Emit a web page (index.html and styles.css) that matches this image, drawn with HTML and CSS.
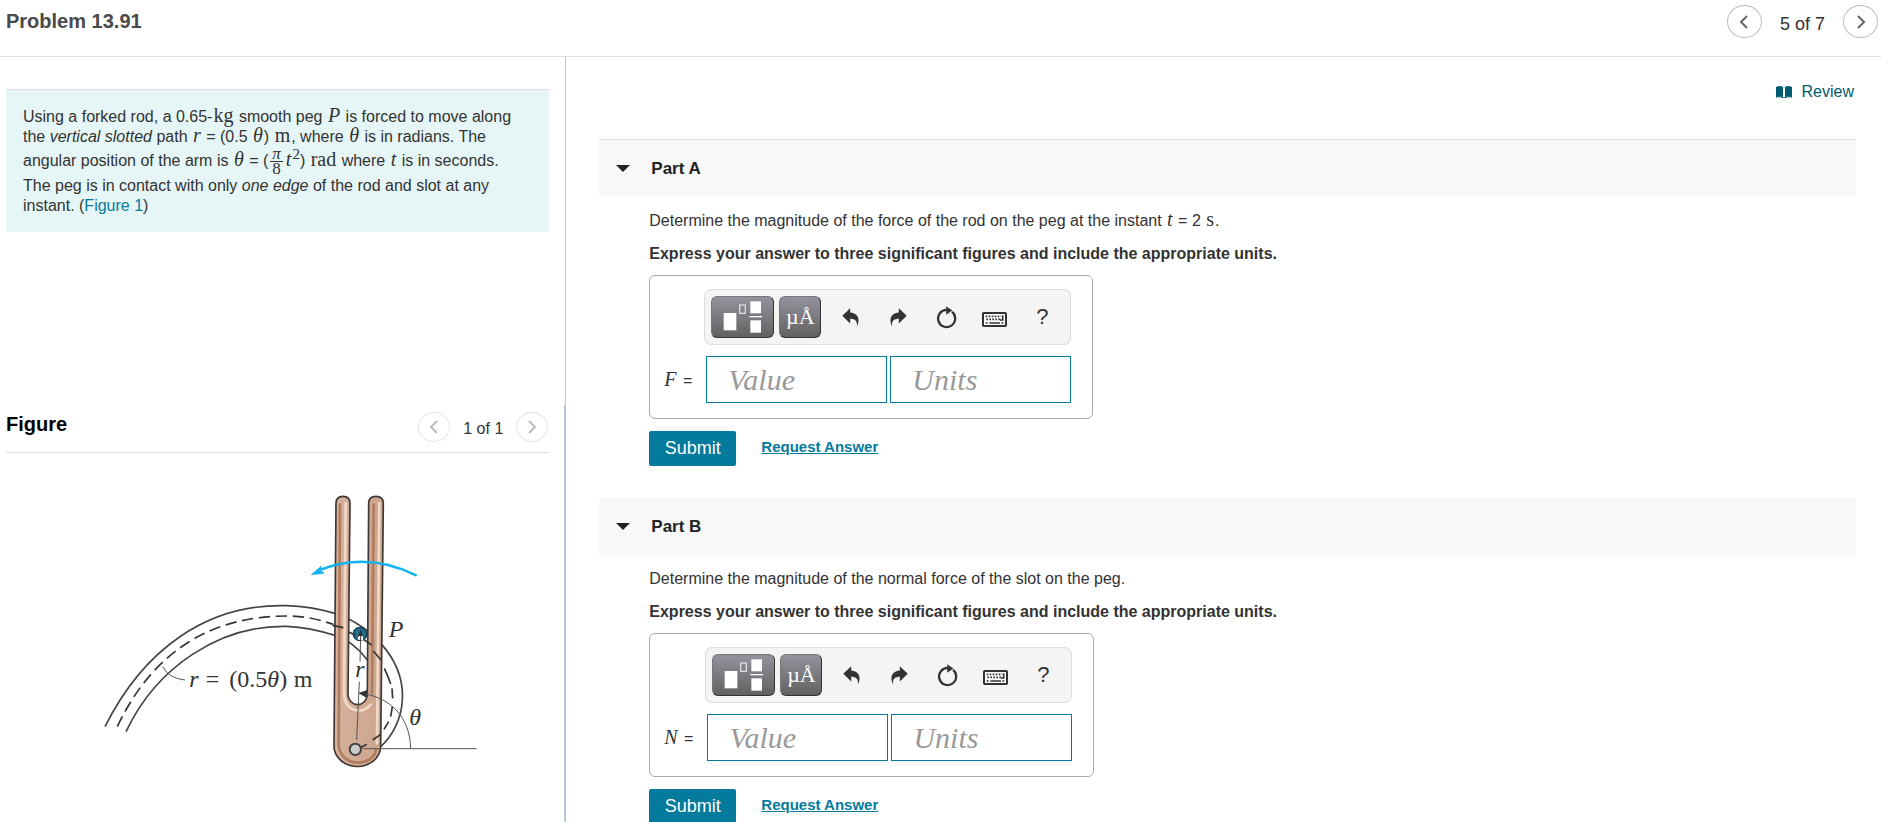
FILE: index.html
```
<!DOCTYPE html>
<html lang="en">
    <head>
        <meta charset="utf-8">
        <meta name="viewport" content="width=device-width, initial-scale=1">
        <title>Problem 13.91</title>
        <link rel="stylesheet" href="styles.css">
    </head>
    <body>
        <svg class="defs" width="0" height="0" aria-hidden="true">
            <symbol id="chevron-left" viewBox="0 0 10 16"><path d="M8 2L2 8l6 6" fill="none" stroke="currentColor" stroke-width="2"/></symbol>
            <symbol id="chevron-right" viewBox="0 0 10 16"><path d="M2 2l6 6-6 6" fill="none" stroke="currentColor" stroke-width="2"/></symbol>
            <symbol id="templates" viewBox="0 0 120 96">
                <rect x="2" y="36" width="38" height="52" fill="#fff"/>
                <rect x="50" y="12" width="17" height="25" fill="none" stroke="#ddd" stroke-width="4"/>
                <rect x="82" y="1" width="32" height="36" fill="#fff"/>
                <rect x="79" y="45" width="38" height="4" fill="#fff"/>
                <rect x="82" y="58" width="32" height="37" fill="#fff"/>
            </symbol>
            <symbol id="undo" viewBox="0 0 56 64"><path d="M3 27L27 4v13C49 19 60 35 47 61C50 45 44 36 27 36v14z" fill="#333"/></symbol>
            <symbol id="redo" viewBox="0 0 56 64"><path d="M53 27L29 4v13C7 19-4 35 9 61C6 45 12 36 29 36v14z" fill="#333"/></symbol>
            <symbol id="reset" viewBox="0 0 62 70">
                <path d="M48 18A26 26 0 1 1 32 12" fill="none" stroke="#333" stroke-width="7"/>
                <path d="M30 1l19 13-19 13z" fill="#333"/>
            </symbol>
            <symbol id="keyboard" viewBox="0 0 75 45">
                <rect x="3" y="3" width="69" height="39" rx="2" fill="#fff" stroke="#333" stroke-width="6"/>
                <path d="M11 13h46M13 22h42" stroke="#333" stroke-width="5" stroke-dasharray="5 4"/>
                <path d="M11 33h6M22 33h32M58 33h6M62 10v14h-8" fill="none" stroke="#333" stroke-width="5"/>
            </symbol>
        </svg>

        <header class="topbar">
            <h1>Problem 13.91</h1>
            <nav class="pager">
                <button type="button" aria-label="Previous problem"><svg width="10" height="16"><use href="#chevron-left"/></svg></button>
                <span>5 of 7</span>
                <button type="button" aria-label="Next problem"><svg width="10" height="16"><use href="#chevron-right"/></svg></button>
            </nav>
        </header>

        <main class="content">
            <div class="left">
                <section class="problem">
                    <p class="statement">Using a forked rod, a 0.65-<span class="math">kg</span> smooth peg <i class="math">P</i> is forced to move along the <em>vertical slotted</em> path <i class="math">r</i> = (0.5 <i class="math">θ</i>) <span class="math">m</span>, where <i class="math">θ</i> is in radians. The angular position of the arm is <i class="math">θ</i> = (<span class="frac"><i>π</i><span>8</span></span><i class="math">t</i><sup>2</sup>) <span class="math">rad</span> where <i class="math">t</i> is in seconds. The peg is in contact with only <em>one edge</em> of the rod and slot at any instant. (<a href="#figure">Figure 1</a>)</p>
                </section>

                <section class="figure" id="figure">
                    <div class="figure-head">
                        <h2>Figure</h2>
                        <nav class="pager small">
                            <button type="button" disabled aria-label="Previous figure"><svg width="10" height="16"><use href="#chevron-left"/></svg></button>
                            <span>1 of 1</span>
                            <button type="button" disabled aria-label="Next figure"><svg width="10" height="16"><use href="#chevron-right"/></svg></button>
                        </nav>
                    </div>
                    <svg class="drawing" viewBox="0 0 1200 900" role="img" aria-label="Forked rod and slotted path">
                        <defs>
                            <linearGradient id="rod" x1="0" x2="1">
                                <stop offset="0" stop-color="#d6b29c"/>
                                <stop offset="1" stop-color="#cca48c"/>
                            </linearGradient>
                        </defs>
                        <!-- slot edges -->
                        <g fill="none" stroke="#444" stroke-width="5">
                            <path d="M45 740C160 510 350 370 590 377C650 379 700 390 735 400C800 422 840 455 875 493C925 550 940 610 937 660C934 720 905 770 872 800"/>
                            <path d="M108 755C200 560 390 435 590 439C650 442 700 455 735 466C775 480 810 510 832 540"/>
                        </g>
                        <path d="M82 740C190 510 370 405 600 408C650 409 690 420 730 433" fill="none" stroke="#333" stroke-width="5" stroke-dasharray="34 17"/>
                        <circle cx="810" cy="462" r="20" fill="#22708f" stroke="#173c50" stroke-width="4"/>
                        <!-- forked rod -->
                        <path d="M738 70Q738 49 759 49Q780 49 780 70L774 640C774 685 832 685 832 640L836 70Q836 49 858 49Q880 49 880 70L872 800A70 62 0 0 1 732 795Z" fill="url(#rod)" stroke="#3f3733" stroke-width="5"/>
                        <g fill="none" stroke-linecap="round">
                            <path d="M750 74L746 795C750 860 845 865 858 810M851 74L846 640" stroke="#b07c5e" stroke-width="8"/>
                            <path d="M767 70L762 640C766 700 820 702 842 674M868 70L861 790" stroke="#f1d9ca" stroke-width="8"/>
                        </g>
                        <path d="M728 436L760 443M775 455L795 465M820 478L845 495M850 513L873 540M883 565Q895 590 902 612M906 625L908 655M907 680L902 710M896 725L882 748M872 763L848 780M830 793L812 803" fill="none" stroke="#333" stroke-width="5"/>
                        <!-- dimensions -->
                        <g fill="none" stroke="#555" stroke-width="3">
                            <path d="M812 470L810 545M808 605L800 780M820 806H1160M825 642C900 655 960 710 962 805"/>
                            <path d="M218 560Q235 595 285 600"/>
                        </g>
                        <path d="M805 639L832 630 829 653ZM812 448L802 472 820 472Z" fill="#333"/>
                        <path d="M802 478L806 468 818 468 820 482Z" fill="#fff"/>
                        <path d="M812 462V482" stroke="#333" stroke-width="3"/>
                        <circle cx="796" cy="808" r="17" fill="#c9cacc" stroke="#444" stroke-width="6"/>
                        <path d="M692 269Q835 214 980 287" fill="none" stroke="#12b2ef" stroke-width="7"/>
                        <path d="M664 284L694 258 692 271 702 280Z" fill="#12b2ef" stroke="#12b2ef" stroke-width="2"/>
                        <g class="drawing-text">
                            <text x="298" y="620" font-style="italic">r</text>
                            <text x="347" y="620">=</text>
                            <text x="418" y="620">(0.5<tspan font-style="italic">θ</tspan>)</text>
                            <text x="611" y="620">m</text>
                            <text x="896" y="470" font-style="italic">P</text>
                            <text x="796" y="592" font-style="italic">r</text>
                            <text x="958" y="735" font-style="italic">θ</text>
                        </g>
                    </svg>
                </section>
            </div>

            <div class="right">
                <a class="review" href="#">
                    <svg width="16" height="12" viewBox="0 0 16 12"><path d="M0 1Q4-1 7 1V11Q4 10 0 11zM9 1Q12-1 16 1V11Q12 10 9 11z" fill="#005a70"/><path d="M0 11Q5 10 8 12Q11 10 16 11" fill="none" stroke="#005a70"/></svg>
                    Review
                </a>

                <details class="part" open>
                    <summary>Part A</summary>
                    <form class="part-body">
                        <p>Determine the magnitude of the force of the rod on the peg at the instant <i class="math">t</i> = 2 <span class="math">s</span>.</p>
                        <p class="hint">Express your answer to three significant figures and include the appropriate units.</p>
                        <div class="answer">
                            <div class="toolbar">
                                <button type="button" class="dark wide" aria-label="Templates"><svg width="40" height="32"><use href="#templates"/></svg></button>
                                <button type="button" class="dark units" aria-label="Symbols">µÅ</button>
                                <button type="button" class="tool" aria-label="Undo"><svg width="19" height="21"><use href="#undo"/></svg></button>
                                <button type="button" class="tool" aria-label="Redo"><svg width="19" height="21"><use href="#redo"/></svg></button>
                                <button type="button" class="tool" aria-label="Reset"><svg width="21" height="23"><use href="#reset"/></svg></button>
                                <button type="button" class="tool low" aria-label="Keyboard shortcuts"><svg width="25" height="15"><use href="#keyboard"/></svg></button>
                                <button type="button" class="tool">?</button>
                            </div>
                            <div class="fields">
                                <label for="valueA"><i>F</i> =</label>
                                <input type="text" id="valueA" placeholder="Value">
                                <input type="text" id="unitsA" placeholder="Units" aria-label="Units">
                            </div>
                        </div>
                        <div class="actions">
                            <button type="submit" class="submit">Submit</button>
                            <a href="#">Request Answer</a>
                        </div>
                    </form>
                </details>

                <details class="part" open>
                    <summary>Part B</summary>
                    <form class="part-body">
                        <p>Determine the magnitude of the normal force of the slot on the peg.</p>
                        <p class="hint">Express your answer to three significant figures and include the appropriate units.</p>
                        <div class="answer">
                            <div class="toolbar">
                                <button type="button" class="dark wide" aria-label="Templates"><svg width="40" height="32"><use href="#templates"/></svg></button>
                                <button type="button" class="dark units" aria-label="Symbols">µÅ</button>
                                <button type="button" class="tool" aria-label="Undo"><svg width="19" height="21"><use href="#undo"/></svg></button>
                                <button type="button" class="tool" aria-label="Redo"><svg width="19" height="21"><use href="#redo"/></svg></button>
                                <button type="button" class="tool" aria-label="Reset"><svg width="21" height="23"><use href="#reset"/></svg></button>
                                <button type="button" class="tool low" aria-label="Keyboard shortcuts"><svg width="25" height="15"><use href="#keyboard"/></svg></button>
                                <button type="button" class="tool">?</button>
                            </div>
                            <div class="fields">
                                <label for="valueB"><i>N</i> =</label>
                                <input type="text" id="valueB" placeholder="Value">
                                <input type="text" id="unitsB" placeholder="Units" aria-label="Units">
                            </div>
                        </div>
                        <div class="actions">
                            <button type="submit" class="submit">Submit</button>
                            <a href="#">Request Answer</a>
                        </div>
                    </form>
                </details>
            </div>
        </main>
    </body>
</html>
```
FILE: styles.css
```
* {
    box-sizing: border-box;
}

body {
    margin: 0;
    height: 100vh;
    display: flex;
    flex-direction: column;
    overflow: hidden;
    background: #fff;
    color: #333;
    font: 16px/20px "Liberation Sans", Arial, sans-serif;
}

h1, h2, p {
    margin: 0;
}

a {
    color: #047a9c;
    text-decoration: none;
}

button {
    font-family: inherit;
    padding: 0;
    cursor: pointer;
}

.defs {
    position: absolute;
}

/* Top bar */
.topbar {
    display: flex;
    justify-content: space-between;
    align-items: flex-start;
    height: 57px;
    padding: 5px 3px 0 6px;
    border-bottom: 1px solid #ddd;
}

.topbar h1 {
    font-size: 20px;
    line-height: 32px;
    color: #4a4a4a;
}

.pager {
    display: flex;
    align-items: center;
    gap: 18px;
    font-size: 18px;
}

.pager span {
    padding-top: 4px;
}

.pager button {
    display: flex;
    align-items: center;
    justify-content: center;
    width: 35px;
    height: 33px;
    border: 1px solid #bbb;
    border-radius: 50%;
    background: #fff;
    color: #666;
}

.pager.small {
    gap: 13px;
    font-size: 16px;
}

.pager.small button {
    width: 32px;
    height: 30px;
    border-color: #e3e3e3;
    color: #bbb;
}

.content {
    flex: 1;
    min-height: 0;
    display: flex;
}

/* Left side: statement and figure */
.left {
    flex: none;
    width: calc(30% + 2px);
    display: grid;
    grid-template-rows: 5fr 6fr;
}

.problem {
    padding: 32px 16px 0 6px;
    border-right: 1px solid #b8c8d8;
    min-height: 0;
}

.statement {
    padding: 17px 28px 16px 17px;
    border-top: 1px solid #ddd;
    background: #e6f6f7;
}

.math {
    margin: 0 1px;
    font-family: "Liberation Serif", "Times New Roman", serif;
    font-size: 20px;
    line-height: 15px;
}

.frac {
    display: inline-flex;
    flex-direction: column;
    align-items: center;
    vertical-align: middle;
    margin: 0 2px;
    font: 17px/14px "Liberation Serif", serif;
}

.frac i {
    padding: 0 2px;
    border-bottom: 1px solid #333;
}

sup {
    font: 15px/10px "Liberation Serif", serif;
}

.figure {
    padding: 7px 16px 0 6px;
    border-right: 2px solid #b8c8d8;
    min-height: 0;
}

.figure-head {
    display: flex;
    justify-content: space-between;
    align-items: flex-start;
    padding-bottom: 10px;
    border-bottom: 1px solid #ddd;
}

.figure-head h2 {
    font-size: 20px;
    line-height: 24px;
    color: #000;
}

.drawing {
    display: block;
    width: 400px;
    margin: 27px 0 0 84px;
}

.drawing-text {
    font-family: "Liberation Serif", serif;
    font-size: 72px;
    fill: #333;
}

/* Right side: parts */
.right {
    flex: 1;
    padding: 25px 25px 0 33px;
}

.review {
    display: flex;
    align-items: center;
    justify-content: flex-end;
    gap: 10px;
    width: fit-content;
    margin: 0 2px 37px auto;
    color: #005a70;
}

.part {
    margin-bottom: 32px;
}

.part summary {
    display: flex;
    align-items: center;
    gap: 21px;
    height: 57px;
    padding-left: 17px;
    background: #f8f8f8;
    color: #222;
    font-size: 17px;
    font-weight: bold;
    cursor: pointer;
}

.review + .part summary {
    height: 58px;
    border-top: 1px solid #ddd;
}

.part summary::before {
    content: "";
    border: 7px solid transparent;
    border-top-color: #222;
    border-bottom: 0;
}

.part-body {
    padding: 14px 0 0 50px;
}

.hint {
    margin: 13px 0 11px;
    font-weight: bold;
}

.answer {
    display: flex;
    flex-direction: column;
    gap: 11px;
    width: fit-content;
    padding: 13px 21px 15px 14px;
    border: 1px solid #aaa;
    border-radius: 6px;
}

.toolbar {
    display: flex;
    align-items: center;
    align-self: flex-end;
    width: 367px;
    height: 56px;
    padding-left: 6px;
    border: 1px solid #ddd;
    border-radius: 7px;
    background: #f4f4f4;
}

.toolbar button {
    display: flex;
    align-items: center;
    justify-content: center;
    height: 42px;
}

.dark {
    width: 42px;
    margin-right: 5px;
    border: 1px solid #333;
    border-top-color: #777;
    border-left-color: #777;
    border-radius: 6px;
    background: linear-gradient(#94929c, #626262);
}

.dark.wide {
    width: 63px;
}

.dark.units {
    color: #fff;
    font: 22px "Liberation Serif", serif;
}

.tool {
    width: 48px;
    border: 0;
    background: none;
    color: #333;
    font-size: 22px;
}

.tool.low {
    padding-top: 4px;
}

.fields {
    display: flex;
    align-items: center;
    gap: 3px;
}

.fields label {
    margin-right: 11px;
}

.fields label i {
    padding-right: 2px;
    font: italic 20px "Liberation Serif", serif;
}

.fields input {
    width: 181px;
    height: 47px;
    padding: 0 21px;
    border: 1px solid #047a9c;
    border-radius: 0;
    font: italic 30px "Liberation Serif", serif;
}

.fields input::placeholder {
    color: #999;
    opacity: 1;
}

.actions {
    display: flex;
    align-items: flex-start;
    gap: 25px;
    margin-top: 12px;
}

.submit {
    width: 87px;
    height: 35px;
    border: 0;
    border-radius: 2px;
    background: #047a9c;
    color: #fff;
    font-size: 18px;
}

.actions a {
    font-size: 15px;
    line-height: 32px;
    font-weight: bold;
    text-decoration: underline;
}
```
